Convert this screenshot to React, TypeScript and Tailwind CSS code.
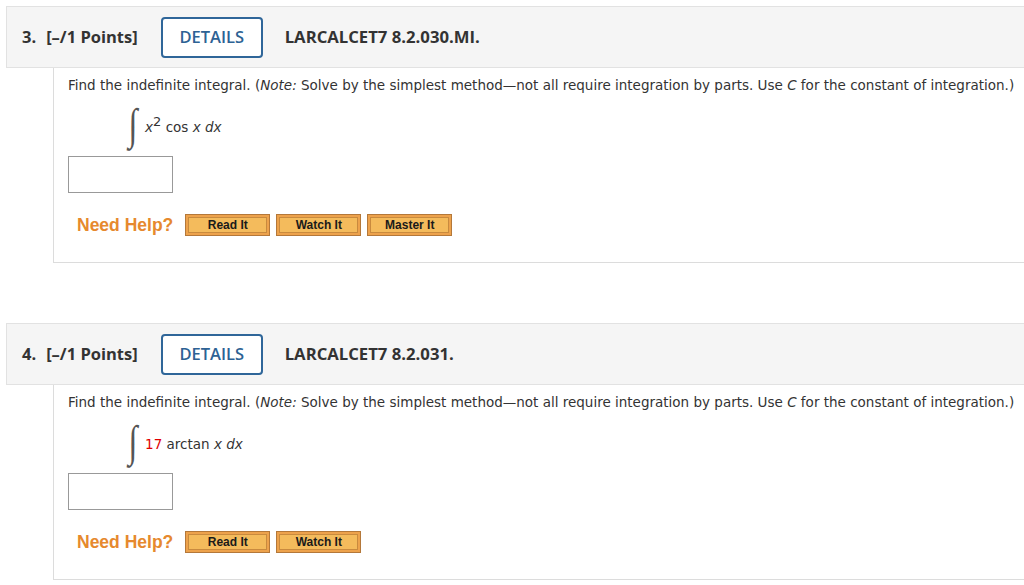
import React from "react";

type Question = {
  num: string;
  code: string;
  integrand: React.ReactNode;
  helpers: string[];
};

const questions: Question[] = [
  {
    num: "3.",
    code: "LARCALCET7 8.2.030.MI.",
    integrand: (
      <>
        <i>x</i>
        <sup className="relative -top-[6px] text-[13px]">2</sup> cos <i>x</i> <i>dx</i>
      </>
    ),
    helpers: ["Read It", "Watch It", "Master It"],
  },
  {
    num: "4.",
    code: "LARCALCET7 8.2.031.",
    integrand: (
      <>
        <span className="text-[#e00000]">17</span> arctan <i>x</i> <i>dx</i>
      </>
    ),
    helpers: ["Read It", "Watch It"],
  },
];

function HelpButton({ label }: { label: string }) {
  return (
    <button
      type="button"
      className="h-[22px] w-[85px] border border-[#b4783a] bg-[#eda24c] p-[2px]"
    >
      <div className="flex h-full w-full items-center justify-center border border-[#c98a3e] bg-[#f4bb5c] font-['Liberation_Sans',Arial,sans-serif] text-[12px] font-bold leading-none text-[#1a1a1a]">
        {label}
      </div>
    </button>
  );
}

function QuestionBlock({ q }: { q: Question }) {
  return (
    <div>
      {/* Header bar */}
      <div className="flex h-[62px] items-center border border-r-0 border-[#e2e2e2] bg-[#f5f5f5] font-['Open_Sans',sans-serif] text-[16.5px] font-bold text-[#333]">
        <span className="ml-[15px]">{q.num}</span>
        <span className="ml-[10px]">[–/1 Points]</span>
        <button
          type="button"
          className="ml-[23px] flex h-[41px] w-[102px] items-center justify-center rounded-[4px] border-2 border-[#2f6699] bg-white text-[16.5px] font-semibold text-[#2d6294]"
        >
          DETAILS
        </button>
        <span className="ml-[22px] text-[16.7px]">{q.code}</span>
      </div>

      {/* Body */}
      <div className="ml-[47px] border-b border-l border-[#dcdcdc] pb-[26px] pl-[14px] pt-[8px] font-['DejaVu_Sans',Verdana,sans-serif] text-[13.5px] text-[#333]">
        <p className="leading-[18px]">
          Find the indefinite integral. (<i>Note:</i> Solve by the simplest method—not all require integration by parts. Use{" "}
          <i>C</i> for the constant of integration.)
        </p>
        <div className="ml-[59px] mt-[14px] flex h-[38px] items-center">
          <span className="-mt-[4px] inline-block scale-x-75 font-['Liberation_Serif',serif] text-[44px] font-light leading-none text-[#555]">
            ∫
          </span>
          <span className="ml-[6px]">{q.integrand}</span>
        </div>
        <div className="mt-[10px] h-[37px] w-[105px] border border-[#999] bg-white" />
        <div className="mt-[21px] flex h-[22px] items-center">
          <span className="ml-[9px] font-['Liberation_Sans',Arial,sans-serif] text-[17.5px] font-bold text-[#e6892e]">
            Need Help?
          </span>
          <div className="ml-[12px] flex gap-[6px]">
            {q.helpers.map((h) => (
              <HelpButton key={h} label={h} />
            ))}
          </div>
        </div>
      </div>
    </div>
  );
}

export default function App() {
  return (
    <div className="min-h-[585px] w-[1024px] overflow-hidden bg-white pl-[6px] pt-[6px]">
      <QuestionBlock q={questions[0]} />
      <div className="h-[60px]" />
      <QuestionBlock q={questions[1]} />
    </div>
  );
}
